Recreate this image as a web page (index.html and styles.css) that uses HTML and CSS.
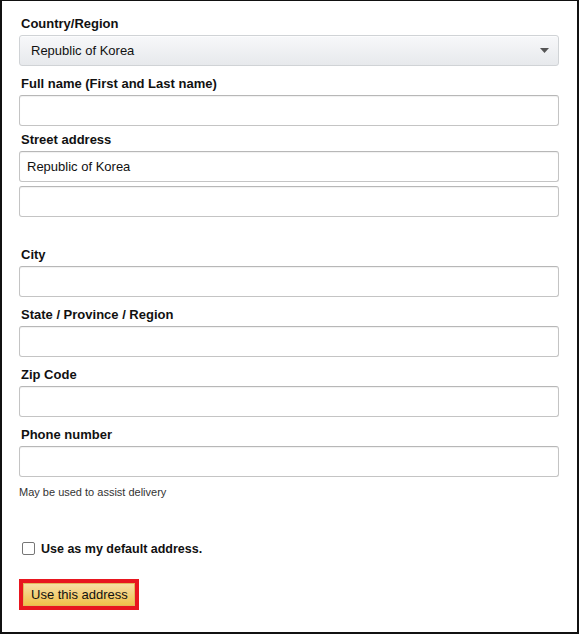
FILE: index.html
```html
<!DOCTYPE html>
<html lang="en">
<head>
<meta charset="utf-8">
<title>Add address</title>
<link rel="stylesheet" href="styles.css">
</head>
<body>
<form class="page">
  <div class="field field-first">
    <label class="label">Country/Region</label>
    <div class="dropdown">
      <span class="dropdown-text">Republic of Korea</span>
      <svg class="dropdown-arrow" width="9" height="5" viewBox="0 0 9 5"><path d="M0 0H9L4.5 5Z" fill="#555"/></svg>
    </div>
  </div>
  <div class="field">
    <label class="label">Full name (First and Last name)</label>
    <input class="input" type="text" value="">
  </div>
  <div class="field field-tight">
    <label class="label">Street address</label>
    <input class="input" type="text" value="Republic of Korea">
    <input class="input input-second" type="text" value="">
  </div>
  <div class="field field-spaced">
    <label class="label">City</label>
    <input class="input" type="text" value="">
  </div>
  <div class="field">
    <label class="label">State / Province / Region</label>
    <input class="input" type="text" value="">
  </div>
  <div class="field">
    <label class="label">Zip Code</label>
    <input class="input" type="text" value="">
  </div>
  <div class="field">
    <label class="label">Phone number</label>
    <input class="input" type="text" value="">
    <div class="hint">May be used to assist delivery</div>
  </div>
  <label class="check-row">
    <span class="checkbox"></span>
    <span class="check-label">Use as my default address.</span>
  </label>
  <div class="submit-wrap">
    <span class="submit-outline">
      <span class="submit-btn">Use this address</span>
    </span>
  </div>
</form>
</body>
</html>
```

FILE: styles.css
```css
html, body {
  margin: 0;
  padding: 0;
  background: #fff;
}

.page {
  display: flex;
  flex-direction: column;
  width: 579px;
  height: 634px;
  box-sizing: border-box;
  border: 2px solid #111;
  border-top-width: 1px;
  padding: 0 18px 0 17px;
  font-family: "Liberation Sans", Arial, sans-serif;
  color: #111;
}

.field {
  display: flex;
  flex-direction: column;
  margin-top: 8px;
}

.field-first {
  margin-top: 13px;
}

.field-tight {
  margin-top: 4px;
}

.field-spaced {
  margin-top: 28px;
}

.label {
  display: block;
  font-size: 13px;
  font-weight: bold;
  line-height: 19px;
  margin-bottom: 2px;
  padding-left: 2px;
  color: #111;
}

.dropdown {
  display: flex;
  align-items: center;
  justify-content: space-between;
  height: 31px;
  box-sizing: border-box;
  border: 1px solid #d0d3d6;
  border-radius: 3px;
  background: linear-gradient(#f7f8fa, #e7e9ec);
  padding: 0 9px 0 11px;
  box-shadow: inset 0 1px 0 rgba(255,255,255,0.6);
}

.dropdown-text {
  font-size: 13px;
  color: #111;
}

.dropdown-arrow {
  display: block;
}

.input {
  display: block;
  width: 100%;
  height: 31px;
  box-sizing: border-box;
  margin: 0;
  border: 1px solid #c4c4c4;
  border-top-color: #b7b7b7;
  border-radius: 3px;
  padding: 0 7px;
  font-family: "Liberation Sans", Arial, sans-serif;
  font-size: 13px;
  color: #111;
  background: #fff;
  box-shadow: inset 0 1px 1px rgba(0,0,0,0.06);
  outline: none;
}

.input-second {
  margin-top: 4px;
}

.hint {
  margin-top: 8px;
  font-size: 11px;
  line-height: 14px;
  color: #333;
}

.check-row {
  display: flex;
  align-items: center;
  gap: 6px;
  margin-top: 40px;
  padding-left: 3px;
  height: 19px;
}

.checkbox {
  width: 13px;
  height: 13px;
  box-sizing: border-box;
  border: 1px solid #767676;
  border-radius: 2px;
  background: #fff;
}

.check-label {
  font-size: 12.5px;
  font-weight: bold;
  color: #111;
}

.submit-wrap {
  display: flex;
  margin-top: 21px;
}

.submit-outline {
  display: flex;
  border: 4px solid #e8161f;
}

.submit-btn {
  display: block;
  height: 23px;
  box-sizing: border-box;
  line-height: 21px;
  padding: 0 6px 0 7px;
  border: 1px solid #e2b95a;
  background: linear-gradient(#f7dfa5, #f0c14b);
  font-size: 13px;
  color: #111;
}
```
